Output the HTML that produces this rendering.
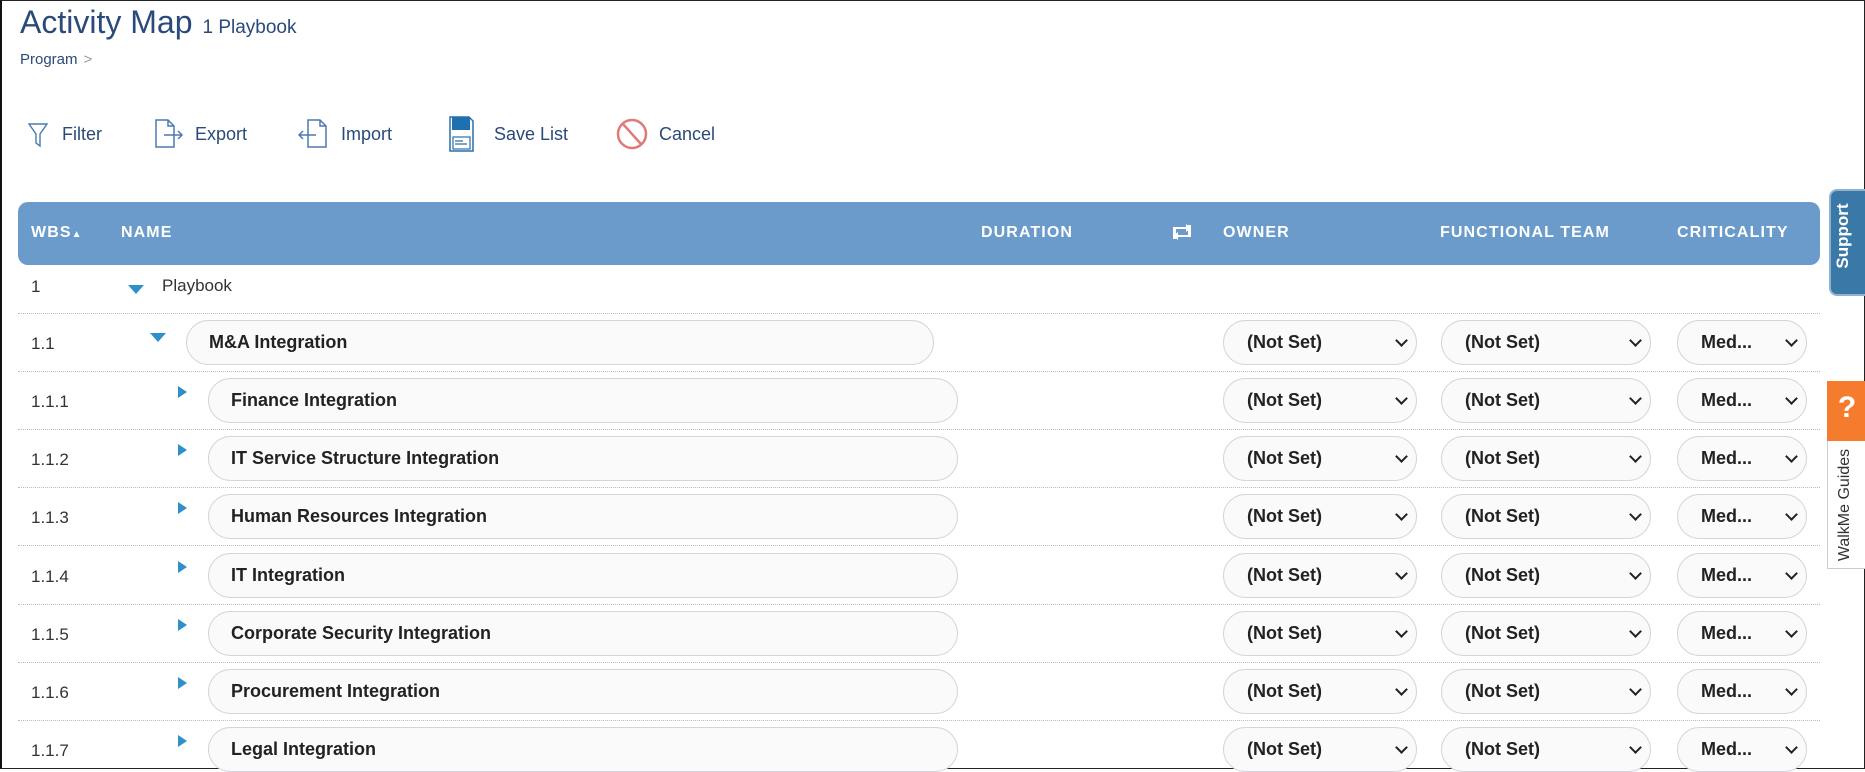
<!DOCTYPE html>
<html><head><meta charset="utf-8"><style>
*{box-sizing:border-box;margin:0;padding:0}
body{width:1865px;height:769px;overflow:hidden;background:#fff;font-family:"Liberation Sans",sans-serif;position:relative;border:1px solid #222;border-left:2px solid #111}
.a{position:absolute}
.title{left:18px;top:3px;font-size:32px;color:#2a4a7a;font-weight:300}
.title span{font-size:19px;margin-left:10px;color:#2a4a7a}
.crumb{left:18px;top:50px;font-size:15px;color:#2a4a7a}
.crumb i{font-style:normal;color:#999;margin-left:6px}
.tb{top:123px;font-size:18px;color:#2a4a7a}
.hdr{left:16px;top:201px;width:1802px;height:63px;background:#6a9bcb;border-radius:10px}
.h{top:223px;font-size:16px;font-weight:bold;color:#fff;letter-spacing:1.1px}
.line{left:16px;width:1802px;height:0;border-top:1px dotted #bbb}
.wbs{left:29px;font-size:17px;color:#333}
.pill{height:45px;border:1px solid #d4d4dc;border-radius:23px;background:#fafafa;font-size:18px;font-weight:bold;color:#222;padding:11px 0 0 22px}
.sel{height:45px;border:1px solid #d4d4dc;border-radius:23px;background:#fafafa;font-size:18px;font-weight:bold;color:#222;padding:11px 0 0 23px}
.sel:after{content:"";position:absolute;right:10px;top:15px;width:7px;height:7px;border-right:2.5px solid #222;border-bottom:2.5px solid #222;transform:rotate(45deg)}
.tr{width:0;height:0;border-top:6px solid transparent;border-bottom:6px solid transparent;border-left:9px solid #2f8fc9}
.td{width:0;height:0;border-left:8px solid transparent;border-right:8px solid transparent;border-top:9px solid #2f8fc9}
</style></head><body>
<div class="a title">Activity Map<span>1 Playbook</span></div>
<div class="a crumb">Program<i>&gt;</i></div>

<svg class="a" style="left:26px;top:122px" width="20" height="24" viewBox="0 0 20 24"><path d="M1 1H19L12 11V23L8 20V11Z" fill="none" stroke="#4a7ab0" stroke-width="1.4"/></svg>
<div class="a tb" style="left:60px">Filter</div>
<svg class="a" style="left:152px;top:118px" width="30" height="30" viewBox="0 0 30 30"><path d="M2 1H14L20 7V28H2Z M14 1V7H20" fill="none" stroke="#4a7ab0" stroke-width="1.5"/><path d="M10 16H28M24 12L28 16L24 20" fill="none" stroke="#4a7ab0" stroke-width="1.5"/></svg>
<div class="a tb" style="left:193px">Export</div>
<svg class="a" style="left:296px;top:118px" width="30" height="30" viewBox="0 0 30 30"><path d="M10 1H22L28 7V28H10Z M22 1V7H28" fill="none" stroke="#4a7ab0" stroke-width="1.5"/><path d="M1 16H18M5 12L1 16L5 20" fill="none" stroke="#4a7ab0" stroke-width="1.5"/></svg>
<div class="a tb" style="left:339px">Import</div>
<svg class="a" style="left:447px;top:115px" width="25" height="36" viewBox="0 0 25 36"><path d="M1 1H20L24 5V35H1Z" fill="#fff" stroke="#2a6fa8" stroke-width="1.5"/><rect x="3" y="1" width="18" height="13" fill="#1f70b0"/><rect x="4" y="21" width="17" height="12" fill="none" stroke="#2a6fa8" stroke-width="1.2"/><path d="M6 25H14M6 28H18" stroke="#2a6fa8" stroke-width="1.2"/></svg>
<div class="a tb" style="left:492px">Save List</div>
<svg class="a" style="left:614px;top:117px" width="32" height="32" viewBox="0 0 32 32"><circle cx="16" cy="16" r="14" fill="none" stroke="#e07a7a" stroke-width="2.5"/><path d="M7 6L25 26" stroke="#e07a7a" stroke-width="2.5"/></svg>
<div class="a tb" style="left:657px">Cancel</div>

<div class="a hdr"></div>
<div class="a h" style="left:29px">WBS<span style="font-size:10px">&#9650;</span></div>
<div class="a h" style="left:119px">NAME</div>
<div class="a h" style="left:979px">DURATION</div>
<svg class="a" style="left:1168px;top:221px" width="24" height="20" viewBox="0 0 24 20"><path d="M3 17V5H16V2L21 6L16 10V7H6V17Z M21 3V15H8V18L3 14L8 10V13H18V3Z" fill="#fff"/></svg>
<div class="a h" style="left:1221px">OWNER</div>
<div class="a h" style="left:1438px">FUNCTIONAL TEAM</div>
<div class="a h" style="left:1675px">CRITICALITY</div>

<div class="a wbs" style="top:276px">1</div>
<div class="a td" style="left:126px;top:284px"></div>
<div class="a" style="left:160px;top:275px;font-size:17px;color:#333">Playbook</div>
<div class="a line" style="top:312px"></div>

<div class="a wbs" style="top:333px">1.1</div>
<div class="a td" style="left:148px;top:332px"></div>
<div class="a pill" style="left:184px;top:319px;width:748px">M&amp;A Integration</div>
<div class="a sel" style="left:1221px;top:319px;width:194px">(Not Set)</div>
<div class="a sel" style="left:1439px;top:319px;width:210px">(Not Set)</div>
<div class="a sel" style="left:1675px;top:319px;width:130px">Med...</div>
<div class="a line" style="top:370px"></div>

<div id="rows"></div>
<script>
var names=["Finance Integration","IT Service Structure Integration","Human Resources Integration","IT Integration","Corporate Security Integration","Procurement Integration","Legal Integration"];
var h="";
for(var i=0;i<7;i++){var t=377+i*58.2;
h+='<div class="a wbs" style="top:'+(t+14)+'px">1.1.'+(i+1)+'</div>'+
'<div class="a tr" style="left:176px;top:'+(t+8)+'px"></div>'+
'<div class="a pill" style="left:206px;top:'+t+'px;width:750px">'+names[i]+'</div>'+
'<div class="a sel" style="left:1221px;top:'+t+'px;width:194px">(Not Set)</div>'+
'<div class="a sel" style="left:1439px;top:'+t+'px;width:210px">(Not Set)</div>'+
'<div class="a sel" style="left:1675px;top:'+t+'px;width:130px">Med...</div>';
if(i<6)h+='<div class="a line" style="top:'+(t+51)+'px"></div>';}
document.getElementById("rows").outerHTML=h;
</script>

<div class="a" style="left:1827px;top:188px;width:40px;height:107px;background:#3a78a8;border-radius:8px 0 0 8px;border:2px solid #8fb2cf;border-right:none"></div>
<div class="a" style="left:1831px;top:280px;transform:rotate(-90deg);transform-origin:0 0;color:#fff;font-weight:bold;font-size:17px;width:90px;text-align:center">Support</div>
<div class="a" style="left:1825px;top:380px;width:40px;height:188px;background:#fff;border:1px solid #ccc"></div>
<div class="a" style="left:1825px;top:380px;width:40px;height:60px;background:#f47c2c;color:#fff;font-weight:bold;font-size:30px;text-align:center;padding-top:10px">?</div>
<div class="a" style="left:1834px;top:563px;transform:rotate(-90deg);transform-origin:0 0;color:#333;font-size:16px;width:118px;text-align:center">WalkMe Guides</div>
</body></html>
